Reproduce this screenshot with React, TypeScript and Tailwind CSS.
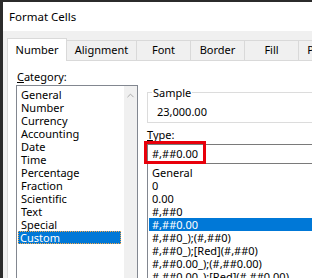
import { ChevronUp } from 'lucide-react';

const categorias = [
  'General', 'Number', 'Currency', 'Accounting', 'Date', 'Time',
  'Percentage', 'Fraction', 'Scientific', 'Text', 'Special', 'Custom',
];

const formatos = [
  'General', '0', '0.00', '#,##0', '#,##0.00', '#,##0_);(#,##0)',
  '#,##0_);[Red](#,##0)', '#,##0.00_);(#,##0.00)', '#,##0.00_);[Red](#,##0.00)',
];

const tabs = [
  { label: 'Alignment', w: 'w-[71px]' },
  { label: 'Font', w: 'w-[55px]' },
  { label: 'Border', w: 'w-[55px]' },
  { label: 'Fill', w: 'w-[55px]' },
  { label: 'Protection', w: 'w-[72px]' },
];

export default function App() {
  return (
    <div className="w-[312px] h-[278px] overflow-hidden bg-[#2b2b2b] flex flex-col font-['Noto_Sans',sans-serif] text-[11px] text-black">
      <div className="h-[2px] shrink-0" />
      <div className="flex flex-1 min-h-0">
        <div className="w-[3px] shrink-0" />
        <div className="flex-1 flex flex-col bg-[#f0f0f0] min-w-0">
          {/* barra de título */}
          <div className="h-[29px] shrink-0 bg-white flex items-center pl-[6px] text-[11.5px]">Format Cells</div>

          <div className="flex-1 flex flex-col pl-[4px] pt-[7px] min-h-0">
            {/* pestañas */}
            <div className="flex items-end h-[22px] shrink-0">
              <div className="w-[60px] h-[23px] -mb-px shrink-0 relative z-10 bg-white border border-b-0 border-[#d9d9d9] flex items-center justify-center">
                Number
              </div>
              {tabs.map(t => (
                <div key={t.label} className={`${t.w} h-[20px] -ml-px shrink-0 border border-b-0 border-[#d9d9d9] flex items-center justify-center whitespace-nowrap`}>
                  {t.label}
                </div>
              ))}
            </div>

            {/* panel */}
            <div className="flex-1 bg-white border-t border-l border-[#d9d9d9] flex pl-[8px]">
              <div className="w-[122px] shrink-0 pt-[9px] flex flex-col">
                <div className="h-[13px] leading-[13px] pl-[1px] mb-[2px]"><span className="underline">C</span>ategory:</div>
                <div className="border border-[#828790] flex h-[220px]">
                  <div className="flex-1 pt-[2px]">
                    {categorias.map(c => (
                      c === 'Custom' ? (
                        <div key={c} className="h-[13px] leading-[13px] ml-[1px] mr-[3px] pl-[2px] bg-[#0078d7] text-white outline-1 outline-dotted outline-[#f5a84a] -outline-offset-1">
                          {c}
                        </div>
                      ) : (
                        <div key={c} className="h-[13px] leading-[13px] pl-[4px]">{c}</div>
                      )
                    ))}
                  </div>
                  <div className="w-[13px] bg-[#f0f0f0] flex justify-center pt-[4px]">
                    <ChevronUp size={11} strokeWidth={2} className="text-[#a3a3a3]" />
                  </div>
                </div>
              </div>

              <div className="w-[200px] shrink-0 ml-[9px] flex flex-col">
                <div className="relative mt-[31px] h-[31px] border border-[#dcdcdc]">
                  <span className="absolute left-[4px] top-[-7px] bg-white px-[1px] leading-[13px]">Sample</span>
                  <div className="pl-[9px] pt-[12px] leading-[13px]">23,000.00</div>
                </div>
                <div className="mt-[5px] h-[13px] leading-[13px]"><span className="underline">T</span>ype:</div>
                <div className="relative mt-[3px] h-[20px] border border-[#7a7a7a] flex items-center pl-[4px]">
                  #,##0.00
                  <div className="absolute left-[-4px] top-[-4px] w-[62px] h-[23px] border-[3px] border-[#e8000b]" />
                </div>
                <div className="border border-t-0 border-[#828790] pt-[2px] h-[120px]">
                  {formatos.map(f => (
                    f === '#,##0.00' ? (
                      <div key={f} className="h-[13px] leading-[13px] ml-[1px] pl-[3px] bg-[#0078d7] text-white whitespace-nowrap">{f}</div>
                    ) : (
                      <div key={f} className="h-[13px] leading-[13px] pl-[4px] whitespace-nowrap">{f}</div>
                    )
                  ))}
                </div>
              </div>
            </div>
          </div>
        </div>
      </div>
    </div>
  );
}
